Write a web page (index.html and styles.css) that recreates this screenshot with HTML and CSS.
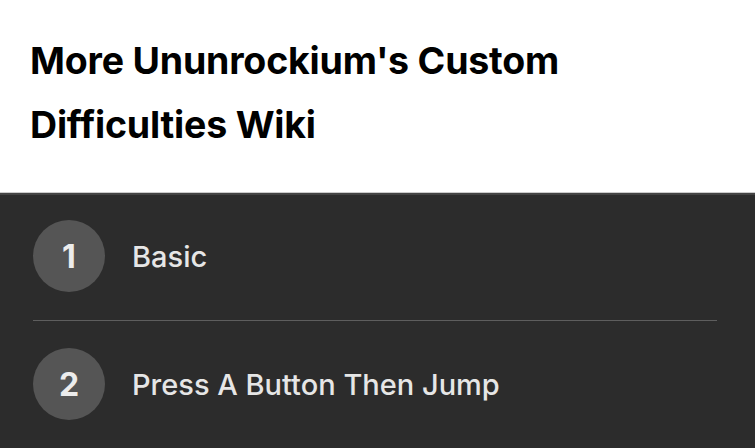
FILE: index.html
```html
<!DOCTYPE html>
<html>
<head>
<meta charset="utf-8">
<link rel="stylesheet" href="styles.css">
</head>
<body>
<header class="wiki-header">
  <h1 class="wiki-title">More Ununrockium's Custom Difficulties Wiki</h1>
</header>
<main class="panel">
  <ol class="list">
    <li class="item"><span class="num">1</span><span class="label">Basic</span></li>
    <li class="item"><span class="num">2</span><span class="label">Press A Button Then Jump</span></li>
  </ol>
</main>
</body>
</html>
```
FILE: styles.css
```css
html, body {
  margin: 0;
  padding: 0;
  background: #2c2c2c;
  height: 100%;
  overflow: hidden;
}
body {
  font-family: Inter, "Noto Sans", sans-serif;
}
.wiki-header {
  background: #ffffff;
  padding: 29px 30px 35px 30px;
  border-bottom: 1px solid #cccccc;
}
.wiki-title {
  margin: 0;
  font-size: 37.5px;
  line-height: 64px;
  font-weight: 700;
  color: #000;
  width: 600px;
  letter-spacing: -0.2px;
}
.panel {
  background: #2c2c2c;
  padding: 0 38px 0 33px;
  border-top: 2px solid #444444;
}
.list {
  list-style: none;
  margin: 0;
  padding: 0;
}
.item {
  display: flex;
  align-items: center;
  gap: 27px;
  padding: 25px 0 28px 0;
}
.item + .item {
  padding-top: 27px;
  border-top: 1px solid #5e5e5e;
}
.num {
  width: 72px;
  height: 72px;
  border-radius: 50%;
  background: #555555;
  color: #ececec;
  font-size: 32px;
  font-weight: 700;
  display: flex;
  align-items: center;
  justify-content: center;
  flex: none;
}
.label {
  color: #e6e6e6;
  font-size: 29px;
  font-weight: 500;
}
```
